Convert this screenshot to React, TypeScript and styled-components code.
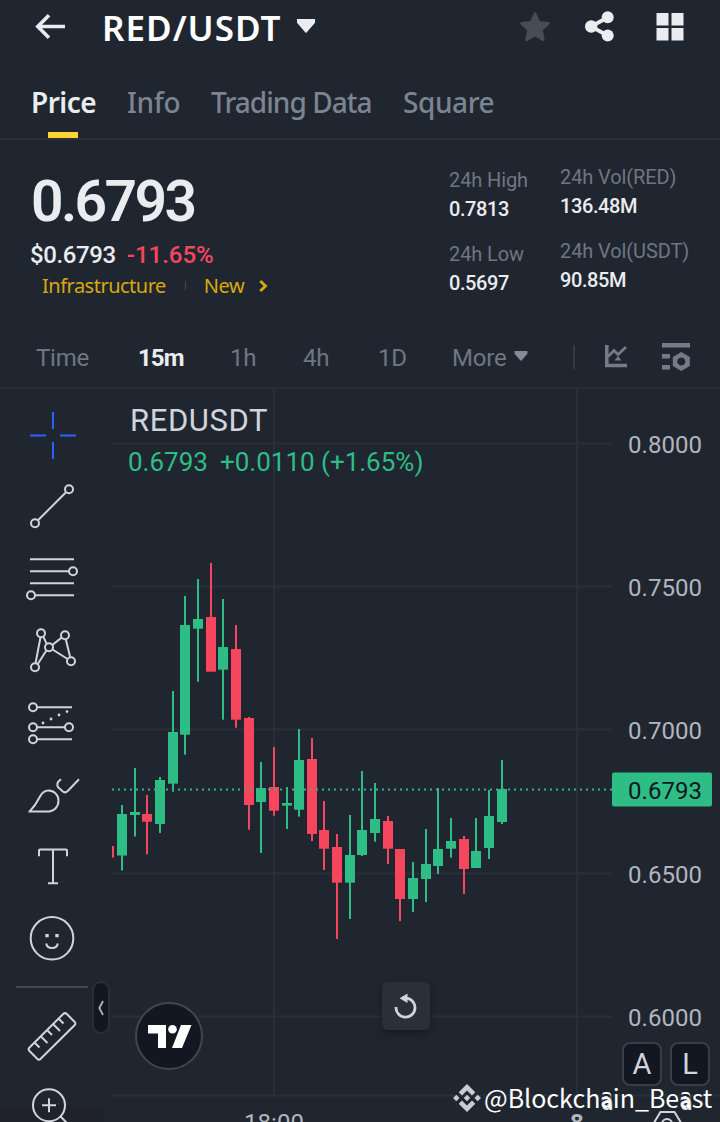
import React from 'react';
import styled, { createGlobalStyle } from 'styled-components';

const c = {
  bg: '#202630',
  line: '#2b2f39',
  text: '#eaecef',
  muted: '#7c8391',
  dim: '#6f7683',
  green: '#2ebd85',
  red: '#f6465d',
  gold: '#d9a90c',
  icon: '#d1d4dc',
  grid: '#2b2e38',
  dark: '#131722',
};

const GlobalStyle = createGlobalStyle`
  * { box-sizing: border-box; }
  body { margin: 0; background: ${c.bg}; overflow: hidden; }
`;

const Page = styled.main`
  width: 720px;
  height: 1122px;
  overflow: hidden;
  background: ${c.bg};
  color: ${c.text};
  font-family: Roboto, 'Liberation Sans', sans-serif;
`;

const Header = styled.header`
  display: flex;
  align-items: center;
  height: 54px;
  padding: 0 35px 0 35px;
`;

const Title = styled.h1`
  display: flex;
  align-items: center;
  height: 54px;
  margin: 0 auto 0 37px;
  padding-top: 2px;
  font: 600 35px/54px 'Noto Sans', sans-serif;
  letter-spacing: 1px;
  color: #fff;
  svg { margin: 0 0 4px 15px; }
`;

const Actions = styled.div`
  display: flex;
  align-items: center;
  gap: 35px;
  margin-bottom: 1px;
`;

const Tabs = styled.nav`
  display: flex;
  height: 86px;
  padding: 28px 0 0 31px;
  border-bottom: 2px solid ${c.line};
`;

const Tab = styled.span<{ $w: number; $ls: number; $active?: boolean }>`
  position: relative;
  width: ${(p) => p.$w}px;
  font: ${(p) => (p.$active ? 600 : 500)} 28px/41px 'Noto Sans', sans-serif;
  letter-spacing: ${(p) => p.$ls}px;
  white-space: nowrap;
  color: ${(p) => (p.$active ? c.text : c.muted)};
`;

const Underline = styled.i`
  position: absolute;
  left: 17px;
  top: 50px;
  width: 30px;
  height: 6px;
  background: #fcd535;
`;

const Summary = styled.section`
  display: flex;
  height: 188px;
`;

const PriceBlock = styled.div`
  width: 449px;
  padding: 31px 0 0 31px;
`;

const BigPrice = styled.div`
  font-weight: 600;
  font-size: 57px;
  line-height: 61px;
  letter-spacing: -2.6px;
`;

const SubPrice = styled.div`
  display: flex;
  gap: 11px;
  margin-left: -1px;
  padding-top: 1px;
  font-weight: 500;
  font-size: 24px;
  line-height: 45px;
  letter-spacing: -0.4px;
`;

const Change = styled.span`
  letter-spacing: 0;
  color: ${c.red};
`;

const Tags = styled.div`
  display: flex;
  align-items: center;
  margin-top: -1px;
  padding-left: 11px;
  font: 400 20px/17px 'Noto Sans', sans-serif;
  letter-spacing: -0.5px;
  color: ${c.gold};
  svg { margin-left: 15px; }
`;

const TagDivider = styled.i`
  width: 1px;
  height: 9px;
  margin: 0 18px 0 19px;
  background: #424956;
`;

const StatColumn = styled.dl<{ $w: number; $top: number }>`
  width: ${(p) => p.$w}px;
  margin: 0;
  padding-top: ${(p) => p.$top}px;
  white-space: nowrap;
`;

const StatLabel = styled.dt`
  font-size: 20px;
  line-height: 28px;
  letter-spacing: -0.1px;
  color: ${c.dim};
`;

const StatValue = styled.dd`
  margin: 0 0 16px;
  padding-top: 1px;
  font-size: 20px;
  font-weight: 500;
  line-height: 29px;
  letter-spacing: -0.4px;
`;

const Periods = styled.nav`
  display: flex;
  align-items: center;
  height: 61px;
  padding: 0 0 0 36px;
  border-bottom: 2px solid #272c36;
`;

const Period = styled.span<{ $w: number; $active?: boolean }>`
  width: ${(p) => p.$w}px;
  padding-top: 2px;
  font-size: 24px;
  line-height: 57px;
  font-weight: ${(p) => (p.$active ? 700 : 400)};
  letter-spacing: ${(p) => (p.$active ? -0.9 : -0.2)}px;
  color: ${(p) => (p.$active ? c.text : c.dim)};
  white-space: nowrap;
  svg { margin-left: 8px; vertical-align: 5px; }
`;

const PeriodDivider = styled.i`
  width: 2px;
  height: 24px;
  margin: 0 30px 2px 0;
  background: #343a45;
`;

const Workspace = styled.section`
  position: relative;
  display: flex;
  height: 733px;
`;

const Tools = styled.aside`
  width: 104px;
  padding-top: 10px;
  background: linear-gradient(${c.bg} 716px, #1f222c 717px);
`;

const ToolSlot = styled.svg`
  display: block;
  fill: none;
  stroke: ${c.icon};
  stroke-width: 2;
`;

const ToolDivider = styled.hr`
  height: 2px;
  margin: 11px 16px 12px;
  border: 0;
  background: #434651;
`;

const Chart = styled.svg`
  display: block;
  margin-left: 8px;
  font-family: Roboto, sans-serif;
`;

const Legend = styled.div`
  position: absolute;
  left: 130px;
  top: 11px;
`;

const PairName = styled.div`
  font-size: 31px;
  line-height: 41px;
  letter-spacing: 0.6px;
  color: ${c.icon};
`;

const Quote = styled.div`
  display: flex;
  margin-left: -2px;
  font-size: 26px;
  line-height: 42px;
  color: ${c.green};
`;

const QuotePart = styled.span<{ $w: number }>`
  width: ${(p) => p.$w}px;
`;

const Handle = styled.div`
  position: absolute;
  left: 92px;
  top: 592px;
  display: flex;
  align-items: center;
  justify-content: center;
  width: 18px;
  height: 53px;
  border: 2px solid #2a2e39;
  border-radius: 9px;
  background: ${c.dark};
`;

const Brand = styled.div`
  position: absolute;
  left: 135px;
  top: 613px;
  display: flex;
  align-items: center;
  justify-content: center;
  width: 68px;
  height: 68px;
  padding: 1px 0 0 1px;
  border: 2px solid #434651;
  border-radius: 50%;
  background: ${c.dark};
`;

const Reset = styled.div`
  position: absolute;
  left: 382px;
  top: 593px;
  display: flex;
  align-items: center;
  justify-content: center;
  width: 48px;
  height: 48px;
  border-radius: 6px;
  background: #2b2f3a;
  box-shadow: 0 3px 6px rgba(10, 12, 20, 0.45);
`;

const ScaleButtons = styled.div`
  position: absolute;
  left: 622px;
  top: 653px;
  display: flex;
  gap: 8px;
`;

const ScaleButton = styled.span`
  width: 40px;
  height: 44px;
  border: 2px solid #3a3e49;
  border-radius: 8px;
  background: ${c.dark};
  font-size: 29px;
  line-height: 41px;
  text-align: center;
  color: ${c.icon};
`;

const Watermark = styled.div`
  position: absolute;
  left: 453px;
  top: 691px;
  display: flex;
  align-items: center;
  gap: 3px;
  height: 36px;
  white-space: nowrap;
`;

const UserName = styled.span`
  height: 36px;
  margin-top: -3px;
  font: 400 25px/36px 'Noto Sans CJK SC', 'Noto Sans', sans-serif;
  color: #fff;
`;

const SmallGlyph = styled.b`
  display: inline-block;
  width: 12.5px;
  font: 700 19px/20px 'DejaVu Sans Mono', monospace;
  text-align: center;
  text-shadow: 0 -3px 0 #202630, 0 -5px 0 #fff, 1px 2px 0 #dfe2ea;
`;

type Candle = [x: number, up: 0 | 1, top: number, bottom: number, high: number, low: number];

const candles: Candle[] = [
  [122, 1, 814, 855.5, 805, 870.5],
  [135, 1, 812, 815, 768, 836.5],
  [147, 0, 814, 821.7, 795, 854.3],
  [160, 1, 780, 824, 777, 833],
  [173, 1, 732, 783.7, 691, 791.7],
  [185, 1, 625, 734.7, 596, 754.7],
  [198, 1, 619, 628.7, 579, 681.7],
  [211, 0, 617, 671.7, 563, 671],
  [223, 1, 647, 669.7, 599, 719.7],
  [236, 0, 649, 719.7, 625, 727.7],
  [249, 0, 718, 805, 717, 829.7],
  [261, 1, 788, 802, 762, 853],
  [274, 0, 787, 810.7, 747, 815.7],
  [287, 1, 803, 805.7, 787, 829],
  [299, 1, 760, 809.7, 729, 816.7],
  [312, 0, 759, 834, 738, 841],
  [324, 0, 830, 848.7, 801, 870],
  [337, 0, 847, 882.7, 834, 939],
  [350, 1, 855, 882.7, 815, 919],
  [362, 1, 830, 855, 771, 856],
  [375, 1, 819, 833, 783, 841.7],
  [388, 0, 821, 848.7, 816, 864],
  [400, 0, 849, 899, 849, 921],
  [413, 1, 878, 899, 862, 912],
  [426, 1, 864, 879, 829, 902],
  [438, 1, 849, 866, 788, 874],
  [451, 1, 841, 848.7, 818, 857.7],
  [464, 0, 839, 869, 836, 894],
  [476, 1, 851, 868, 818, 868],
  [489, 1, 816, 848, 790, 859],
  [502, 1, 789, 822, 760, 824],
];

const levels: [string, number][] = [
  ['0.8000', 443.5],
  ['0.7500', 586.5],
  ['0.7000', 729.5],
  ['0.6500', 873.5],
  ['0.6000', 1016.5],
];

const tools: React.ReactNode[] = [
  <g stroke="#2962ff">
    <path d="M53 13v17M53 43v17M30 36.5h16M60 36.5h16" />
  </g>,
  <>
    <path d="M38 49.3 66 21.3" />
    <circle cx="69" cy="18.3" r="4" /><circle cx="35" cy="52.3" r="4" />
  </>,
  <>
    <path d="M30 16.3h44M30 28.3h39M30 40.3h44M35 52.3h39" />
    <circle cx="73" cy="28.3" r="4" /><circle cx="31" cy="52.3" r="4" />
  </>,
  <>
    <path d="M40.5 22.3 35.6 48M43.3 21.6 46.7 28.9M52.3 30 61.6 22.6M46.4 35.5 37.6 49.2M52.5 34.5 67.6 44M65.8 24.3 70.2 42.2" />
    <circle cx="41" cy="18.2" r="4" /><circle cx="65" cy="20.3" r="4" /><circle cx="49" cy="32.3" r="4" />
    <circle cx="35" cy="52.3" r="4" /><circle cx="71" cy="46.3" r="4" />
  </>,
  <>
    <path d="M37 20.3h35M37 40.3h28M37 52.3h35" />
    <path d="M43 36h0M51 32h0M59 28h0M67 24.6h0" strokeWidth="2.8" strokeLinecap="round" />
    <circle cx="33" cy="20.3" r="4" /><circle cx="33" cy="40.3" r="4" /><circle cx="69" cy="40.3" r="4" /><circle cx="33" cy="52.3" r="4" />
  </>,
  <>
    <path d="M29.5 52.6C36 46 38 41.5 40 37.5C42 33.5 45 31.4 48.5 31.4C54 31.4 58.5 36 58.5 41.5C58.5 48 54 52.6 47 52.6H28.5" />
    <path d="M61 20.3 58.5 22.5C57 24 57 27 58.3 28.4L62.5 32.3C64 33.6 66 33.6 67.5 32.3L79 20.3" />
  </>,
  <path d="M39 25.3V19.5Q39 18.5 40 18.5H66Q67 18.5 67 19.5V25.3M53 18.5V52.3M48 52.3H58" />,
  <>
    <circle cx="52" cy="35.3" r="21.3" />
    <path d="M46.2 40.5c1 6 10.6 6 11.6 0" />
    <path d="M45.3 32.6h3.4M55.3 32.6h3.4" strokeWidth="3.4" />
  </>,
];

const Caret = ({ w, h, color }: { w: number; h: number; color: string }) => (
  <svg width={w} height={h} viewBox="0 0 18 14">
    <path d="M0 0H18V3.8L9.8 13.3Q9 14.3 8.2 13.3L0 3.8Z" fill={color} />
  </svg>
);

export default function App() {
  return (
    <Page>
      <GlobalStyle />
      <Header>
        <svg width="30" height="26" viewBox="0 0 30 26" fill="none" stroke={c.text} strokeWidth="3.6">
          <path d="M2.5 12.5H30M14 1.3 2.8 12.5 14 23.7" />
        </svg>
        <Title>RED/USDT<Caret w={18} h={14} color={c.text} /></Title>
        <Actions>
          <svg width="30" height="30" viewBox="0 0 30 30">
            <path d="M15 1.5 19 10.3 28.6 11.3 21.6 18 23.5 28 15 23.3 6.5 28 8.4 18 1.4 11.3 11 10.3Z" fill="#474d57" stroke="#474d57" strokeWidth="2.4" strokeLinejoin="round" />
          </svg>
          <svg width="29" height="31" viewBox="0 0 29 31" fill={c.text} stroke={c.text}>
            <path d="M22.5 6.5 6 15.5 22.5 24.5" fill="none" strokeWidth="3.8" />
            <g stroke="none"><circle cx="22.7" cy="6.3" r="6" /><circle cx="6.2" cy="15.5" r="6.2" /><circle cx="22.7" cy="24.6" r="6" /></g>
          </svg>
          <svg width="36" height="28" viewBox="-7.5 0 36 28" fill={c.text}>
            <path d="M0 0h12v12.5H0zM15 0h12v12.5H15zM0 15h12v12.5H0zM15 15h12v12.5H15z" />
          </svg>
        </Actions>
      </Header>
      <Tabs>
        <Tab $w={96} $ls={-0.5} $active>Price<Underline /></Tab>
        <Tab $w={84} $ls={-0.3}>Info</Tab>
        <Tab $w={192} $ls={-0.95}>Trading Data</Tab>
        <Tab $w={100} $ls={-0.4}>Square</Tab>
      </Tabs>
      <Summary>
        <PriceBlock>
          <BigPrice>0.6793</BigPrice>
          <SubPrice><span>$0.6793</span><Change>-11.65%</Change></SubPrice>
          <Tags>
            <span>Infrastructure</span><TagDivider /><span>New</span>
            <svg width="9" height="12" viewBox="0 0 9 12" fill="none" stroke={c.gold} strokeWidth="2.8">
              <path d="M1.3 1 6.5 6 1.3 11" />
            </svg>
          </Tags>
        </PriceBlock>
        <StatColumn $w={111} $top={26}>
          <StatLabel>24h High</StatLabel><StatValue>0.7813</StatValue>
          <StatLabel>24h Low</StatLabel><StatValue>0.5697</StatValue>
        </StatColumn>
        <StatColumn $w={150} $top={23}>
          <StatLabel>24h Vol(RED)</StatLabel><StatValue>136.48M</StatValue>
          <StatLabel>24h Vol(USDT)</StatLabel><StatValue>90.85M</StatValue>
        </StatColumn>
      </Summary>
      <Periods>
        <Period $w={102}>Time</Period>
        <Period $w={92} $active>15m</Period>
        <Period $w={73}>1h</Period>
        <Period $w={75}>4h</Period>
        <Period $w={74}>1D</Period>
        <Period $w={121}>More<Caret w={14} h={10} color="#848a96" /></Period>
        <PeriodDivider />
        <svg width="23" height="25" viewBox="0 0 23 25" fill="none" stroke="#747a87">
          <path d="M1.8 0V20.5H22" strokeWidth="3.6" />
          <path d="M3 11.5 9 5.5 13 9.5 21 2" strokeWidth="2.8" />
          <path d="M13 11 16.5 15.5H9.5Z" fill="#747a87" stroke="none" />
        </svg>
        <svg width="63" height="30" viewBox="-34 0 63 30" fill="#747a87">
          <path d="M0 0h28v4.5H0zM0 11h8v4.5H0zM0 22h8v4.5H0z" />
          <path fillRule="evenodd" d="M19.3 9 27.8 14V23L19.3 28 10.8 23V14ZM19.3 14.5a4 4 0 1 0 .01 0Z" />
        </svg>
      </Periods>
      <Workspace>
        <Tools>
          {tools.map((art, i) => (
            <ToolSlot key={i} width="104" height="72" viewBox="0 0 104 72">{art}</ToolSlot>
          ))}
          <ToolDivider />
          <ToolSlot width="104" height="72" viewBox="0 0 104 72">
            <path d="M63.2 14Q65 12.2 66.8 14L74.5 21.7Q76.3 23.5 74.5 25.3L40.7 58.8Q39 60.5 37.2 58.8L29.5 51Q27.8 49.2 29.5 47.5ZM35 43l4.5 4.5M41 36.5l6.5 6.5M47.5 30.5l4.5 4.5M53.5 24.5l6.5 6.5M59 19l4.5 4.5" />
          </ToolSlot>
          <ToolSlot width="104" height="50" viewBox="0 0 104 50">
            <circle cx="49" cy="33.3" r="16" />
            <path d="M42 33.3H56M49 26.3V40.3M60.5 44.5 67 51" />
          </ToolSlot>
        </Tools>
        <Chart width="608" height="733" viewBox="112 389 608 733">
          <g stroke={c.grid} strokeWidth="2">
            {levels.map(([label, y]) => <path key={label} d={`M112 ${y}H612`} />)}
            <path d="M274 389V1095M577 389V1095M112 1095.5H720" />
          </g>
          <rect x="112" y="846" width="2" height="11.6" fill={c.red} />
          {candles.map(([x, up, top, bottom, high, low]) => (
            <g key={x} fill={up ? c.green : c.red}>
              <rect x={x - 1} y={high} width="2" height={low - high} />
              <rect x={x - 5} y={top} width="10" height={bottom - top} />
            </g>
          ))}
          <path d="M112 789.5H612" stroke="#42a98b" strokeWidth="2" strokeDasharray="2 4" />
          <g fill="#b2b5be" fontSize="24">
            {levels.map(([label, y]) => <text key={label} x="628" y={y + 9} textLength="74">{label}</text>)}
          </g>
          <rect x="612" y="772.5" width="100" height="34" rx="2" fill={c.green} />
          <text x="628" y="798.5" fontSize="24" textLength="74" fill="#131722">0.6793</text>
          <g fill="#b2b5be" fontSize="24" textAnchor="middle">
            <text x="274" y="1131">18:00</text>
            <text x="577" y="1131" fontWeight="700">8</text>
          </g>
          <g fill="none" stroke={c.icon} strokeWidth="2">
            <path d="M652 1126 660.5 1112H674.5L683 1126" />
            <circle cx="667" cy="1124" r="5" />
          </g>
        </Chart>
        <Legend>
          <PairName>REDUSDT</PairName>
          <Quote><QuotePart $w={92}>0.6793</QuotePart><QuotePart $w={101}>+0.0110</QuotePart><span>(+1.65%)</span></Quote>
        </Legend>
        <Handle>
          <svg width="6" height="16" viewBox="0 0 6 16" fill="none" stroke="#b2b5be" strokeWidth="1.8"><path d="M5 1 1.3 8 5 15" /></svg>
        </Handle>
        <Brand>
          <svg width="44" height="23" viewBox="0 0 44 23" fill="#fff">
            <path d="M0 0H18V23H10V8.5H0ZM33 0H43.5L34 23H24Z" /><circle cx="24.5" cy="4.3" r="4.3" />
          </svg>
        </Brand>
        <Reset>
          <svg width="24" height="26" viewBox="0 0 24 26" fill="none" stroke={c.icon} strokeWidth="2.8">
            <path d="M2 14A9.5 9.5 0 1 0 12.500 5.200" /><path d="M13.500 0.500V10L5.500 5.200Z" fill={c.icon} stroke="none" />
          </svg>
        </Reset>
        <ScaleButtons><ScaleButton>A</ScaleButton><ScaleButton>L</ScaleButton></ScaleButtons>
        <Watermark>
          <svg width="28" height="28" viewBox="0 0 28 28" fill="#c8cbd6">
            <path d="M14 0 22.3 8.3 19 11.6 14 6.6 9 11.6 5.7 8.3ZM14 28 5.7 19.7 9 16.4 14 21.4 19 16.4 22.3 19.7ZM14 10.7 17.3 14 14 17.3 10.7 14ZM3.3 10.7 6.6 14 3.3 17.3 0 14ZM24.7 10.7 28 14 24.7 17.3 21.4 14Z" />
          </svg>
          <UserName>@Blockch<SmallGlyph>a</SmallGlyph>in_Be<SmallGlyph>a</SmallGlyph>st</UserName>
        </Watermark>
      </Workspace>
    </Page>
  );
}
